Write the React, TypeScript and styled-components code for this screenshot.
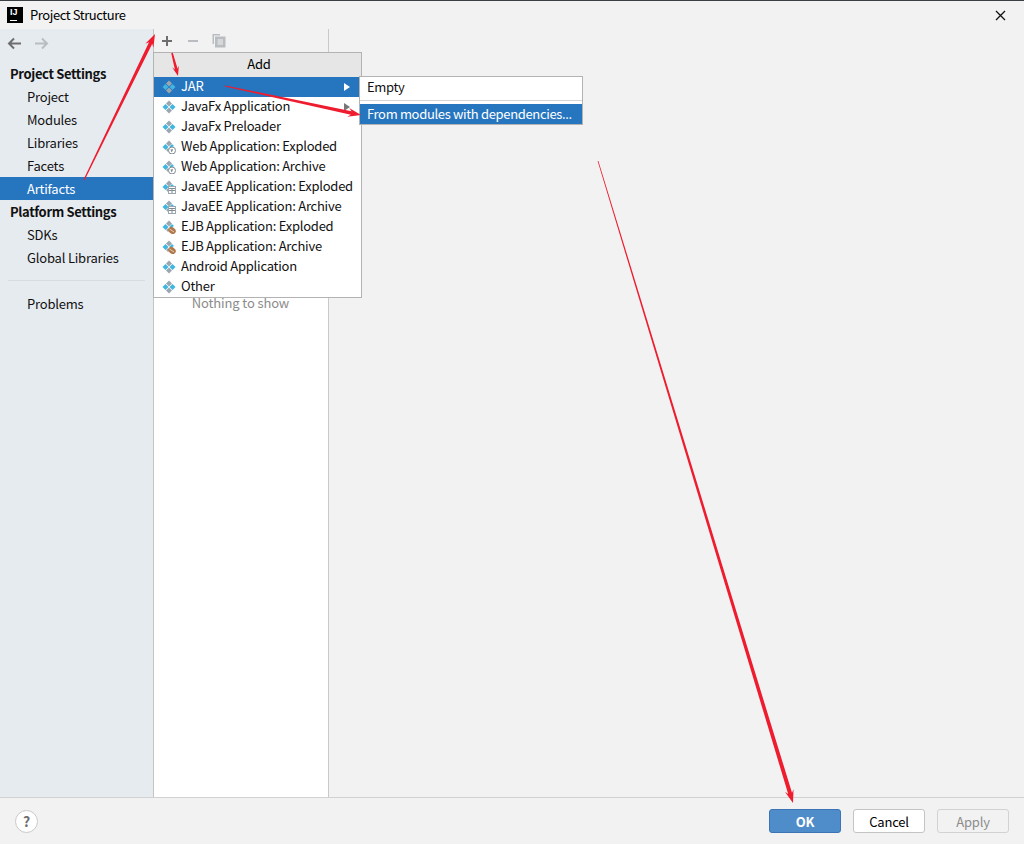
import { createGlobalStyle } from "styled-components";
import styled from "styled-components";

const GlobalStyle = createGlobalStyle`
  html, body {
    margin: 0;
    padding: 0;
    background: #f2f2f2;
  }
  * {
    box-sizing: border-box;
  }
`;

const Window = styled.div`
  position: relative;
  width: 1024px;
  height: 844px;
  display: flex;
  flex-direction: column;
  overflow: hidden;
  background: #f2f2f2;
  color: #000;
  font-family: "Noto Sans CJK SC", "Noto Sans", sans-serif;
  font-size: 13px;
  letter-spacing: -0.2px;
  white-space: nowrap;
  border-top: 1px solid #3c3f41;
`;

const TitleBar = styled.div`
  height: 28px;
  flex: none;
  display: flex;
  align-items: center;
  padding: 0 18px 0 7px;
  gap: 7px;
  background: #f2f2f2;
`;

const Logo = styled.div`
  width: 16px;
  height: 16px;
  background: #000;
  color: #fff;
  font-family: "Liberation Sans", sans-serif;
  font-weight: 700;
  font-size: 9px;
  line-height: 9px;
  letter-spacing: 0;
  padding: 1px 0 0 3px;
  position: relative;

  &::after {
    content: "";
    position: absolute;
    left: 3px;
    bottom: 2px;
    width: 7px;
    height: 1px;
    background: #fff;
  }
`;

const Title = styled.div`
  flex: 1;
  letter-spacing: -0.42px;
  padding-bottom: 1px;
`;

const Body = styled.div`
  flex: 1;
  display: flex;
  min-height: 0;
`;

const Sidebar = styled.div`
  width: 154px;
  flex: none;
  background: #e6ebf0;
  border-right: 1px solid #c4c4c4;
  display: flex;
  flex-direction: column;
`;

const NavArrows = styled.div`
  height: 33px;
  flex: none;
  display: flex;
  align-items: center;
  gap: 12px;
  padding: 0 0 5px 7px;
`;

const SectionTitle = styled.div`
  height: 23px;
  line-height: 23px;
  padding-left: 10px;
  font-weight: 700;
  letter-spacing: -0.35px;
  color: #111;
`;

const NavItem = styled.div<{ $active?: boolean }>`
  height: 23px;
  line-height: 23px;
  padding-left: 27px;
  color: ${(props) => (props.$active ? "#fff" : "#111")};
  background: ${(props) => (props.$active ? "#2675bf" : "transparent")};
`;

const NavList = styled.div`
  display: flex;
  flex-direction: column;
`;

const NavDivider = styled.div`
  height: 1px;
  margin: 11px 8px;
  background: #d9dcdf;
`;

const ListColumn = styled.div`
  width: 175px;
  flex: none;
  display: flex;
  flex-direction: column;
  border-right: 1px solid #c9c9c9;
`;

const Toolbar = styled.div`
  height: 23px;
  flex: none;
  display: flex;
  align-items: center;
  gap: 10px;
  padding-left: 5px;
  background: #f2f2f2;
`;

const ListBody = styled.div`
  flex: 1;
  background: #fff;
  text-align: center;
  padding-top: 241px;
  padding-right: 1px;
  color: #8c8c8c;
  letter-spacing: -0.13px;
`;

const Footer = styled.div`
  height: 47px;
  flex: none;
  display: flex;
  align-items: center;
  gap: 12px;
  padding: 0 15px;
  border-top: 1px solid #d1d1d1;
  background: #f2f2f2;
`;

const HelpButton = styled.div`
  width: 23px;
  height: 23px;
  margin-right: auto;
  border-radius: 50%;
  border: 1px solid #c9c9c9;
  background: #fff;
  color: #6e6e6e;
  font-weight: 700;
  font-size: 14px;
  line-height: 21px;
  text-align: center;
`;

const Button = styled.div<{ $kind?: "primary" | "disabled" }>`
  width: 72px;
  height: 24px;
  border-radius: 3px;
  line-height: 23px;
  text-align: center;
  border: 1px solid
    ${(props) =>
      props.$kind === "primary" ? "#3b74b4" : props.$kind === "disabled" ? "#d2d2d2" : "#c4c4c4"};
  background: ${(props) => (props.$kind === "primary" ? "#4f8cca" : props.$kind === "disabled" ? "#f2f2f2" : "#fff")};
  color: ${(props) => (props.$kind === "primary" ? "#fff" : props.$kind === "disabled" ? "#8c8c8c" : "#000")};
  font-weight: ${(props) => (props.$kind === "primary" ? 700 : 400)};
`;

const Menu = styled.div`
  position: absolute;
  left: 153px;
  top: 51px;
  width: 209px;
  background: #fff;
  border: 1px solid #b3b3b3;
`;

const MenuHeader = styled.div`
  height: 24px;
  line-height: 22px;
  text-align: center;
  padding-left: 3px;
  background: #e6e6e6;
`;

const MenuRow = styled.div<{ $active?: boolean }>`
  height: 20px;
  display: flex;
  align-items: center;
  gap: 5px;
  padding: 0 8px;
  background: ${(props) => (props.$active ? "#2675bf" : "transparent")};
  color: ${(props) => (props.$active ? "#fff" : "#111")};
`;

const MenuLabel = styled.span`
  flex: 1;
  line-height: 18px;
  padding-bottom: 2px;
  letter-spacing: -0.24px;
`;

const MenuCaret = styled.i<{ $active?: boolean }>`
  width: 0;
  height: 0;
  margin-right: 3px;
  border-style: solid;
  border-width: 4px 0 4px 6px;
  border-color: transparent transparent transparent ${(props) => (props.$active ? "#fff" : "#777")};
`;

const SubMenu = styled.div`
  position: absolute;
  left: 359px;
  top: 75px;
  width: 224px;
  background: #fff;
  border: 1px solid #b3b3b3;
`;

const SubRow = styled.div<{ $active?: boolean }>`
  height: ${(props) => (props.$active ? 20 : 23)}px;
  line-height: 19px;
  padding-left: 7px;
  letter-spacing: -0.34px;
  background: ${(props) => (props.$active ? "#2675bf" : "transparent")};
  color: ${(props) => (props.$active ? "#fff" : "#111")};
`;

const SubDivider = styled.div`
  height: 4px;
  border-top: 1px solid #d4d4d4;
`;

const Annotation = styled.svg`
  position: absolute;
  left: 0;
  top: -1px;
  width: 1024px;
  height: 844px;
  pointer-events: none;
`;

type ArrowProps = { x1: number; y1: number; x2: number; y2: number; tail?: number; neck?: number; head?: number; len?: number };

// tapered annotation arrow, thin at the tail and thick near the head
function Arrow({ x1, y1, x2, y2, tail = 0.6, neck = 1.8, head = 4.5, len = 13 }: ArrowProps) {
  const dx = x2 - x1;
  const dy = y2 - y1;
  const d = Math.hypot(dx, dy);
  const ux = dx / d;
  const uy = dy / d;
  const nx = -uy;
  const ny = ux;
  const bx = x2 - ux * len;
  const by = y2 - uy * len;
  const nbx = x2 - ux * (len - 3);
  const nby = y2 - uy * (len - 3);
  const pts = [
    [x1 + nx * tail, y1 + ny * tail],
    [nbx + nx * neck, nby + ny * neck],
    [bx + nx * head, by + ny * head],
    [x2, y2],
    [bx - nx * head, by - ny * head],
    [nbx - nx * neck, nby - ny * neck],
    [x1 - nx * tail, y1 - ny * tail],
  ];
  return <polygon points={pts.map((p) => p.join(",")).join(" ")} fill="#ee1c2e" />;
}

type Badge = "none" | "web" | "ee" | "ejb";

function ArtifactIcon({ badge = "none" }: { badge?: Badge }) {
  const small = badge !== "none";
  return (
    <svg width="14" height="14" viewBox="0 0 14 14" style={{ flex: "none" }}>
      <path d="M7 0.5 L10 3.5 L7 6.5 L4 3.5Z" fill="#9aa7b0" />
      <path d="M3.5 4 L6.5 7 L3.5 10 L0.5 7Z" fill="#40b6e0" />
      {!small && <path d="M10.5 4 L13.5 7 L10.5 10 L7.5 7Z" fill="#40b6e0" />}
      {small && <path d="M10 4 L12 6 L9 8 L7.5 6.5Z" fill="#40b6e0" />}
      {!small && <path d="M7 7.5 L10 10.5 L7 13.5 L4 10.5Z" fill="#9aa7b0" />}
      {small && <path d="M6 8 L7.5 9.5 L6 12 L4 10Z" fill="#9aa7b0" />}
      {badge === "web" && (
        <>
          <circle cx="10" cy="10.5" r="3.5" fill="#fff" stroke="#7f8b91" />
          <path d="M8.5 9.5 L11 9 L10.5 11 L9.5 12.5Z" fill="#7f8b91" />
        </>
      )}
      {badge === "ee" && (
        <>
          <rect x="6.5" y="6.5" width="7" height="7" fill="#fff" stroke="#9aa7b0" />
          <path d="M7 8.5 H13 M7 10.5 H13 M10 8.5 V13" stroke="#7f8b91" strokeWidth="1" />
        </>
      )}
      {badge === "ejb" && (
        <>
          <ellipse cx="10" cy="10.5" rx="4" ry="3.2" fill="#b0794d" transform="rotate(35 10 10.5)" />
          <path d="M7.5 9 L12 12" stroke="#e8cdb4" strokeWidth="1" />
        </>
      )}
    </svg>
  );
}

const items: { label: string; badge?: Badge; active?: boolean; caret?: boolean }[] = [
  { label: "JAR", active: true, caret: true },
  { label: "JavaFx Application", caret: true },
  { label: "JavaFx Preloader" },
  { label: "Web Application: Exploded", badge: "web" },
  { label: "Web Application: Archive", badge: "web" },
  { label: "JavaEE Application: Exploded", badge: "ee" },
  { label: "JavaEE Application: Archive", badge: "ee" },
  { label: "EJB Application: Exploded", badge: "ejb" },
  { label: "EJB Application: Archive", badge: "ejb" },
  { label: "Android Application" },
  { label: "Other" },
];

export default function App() {
  return (
    <>
      <GlobalStyle />
      <Window>
        <TitleBar>
          <Logo>IJ</Logo>
          <Title>Project Structure</Title>
          <svg width="11" height="11" viewBox="0 0 11 11">
            <path d="M1 1 L10 10 M10 1 L1 10" stroke="#111" strokeWidth="1.3" />
          </svg>
        </TitleBar>
        <Body>
          <Sidebar>
            <NavArrows>
              <svg width="15" height="13" viewBox="0 0 15 13">
                <path d="M14 6.5 H2 M7 1.5 L2 6.5 L7 11.5" fill="none" stroke="#6e6e6e" strokeWidth="2" />
              </svg>
              <svg width="15" height="13" viewBox="0 0 15 13">
                <path d="M1 6.5 H13 M8 1.5 L13 6.5 L8 11.5" fill="none" stroke="#b9bdc1" strokeWidth="2" />
              </svg>
            </NavArrows>
            <NavList>
              <SectionTitle>Project Settings</SectionTitle>
              <NavItem>Project</NavItem>
              <NavItem>Modules</NavItem>
              <NavItem>Libraries</NavItem>
              <NavItem>Facets</NavItem>
              <NavItem $active>Artifacts</NavItem>
              <SectionTitle>Platform Settings</SectionTitle>
              <NavItem>SDKs</NavItem>
              <NavItem>Global Libraries</NavItem>
              <NavDivider />
              <NavItem>Problems</NavItem>
            </NavList>
          </Sidebar>
          <ListColumn>
            <Toolbar>
              <svg width="16" height="16" viewBox="0 0 16 16">
                <path d="M8 3 V13 M3 8 H13" stroke="#6e6e6e" strokeWidth="2" />
              </svg>
              <svg width="16" height="16" viewBox="0 0 16 16">
                <path d="M3 8 H13" stroke="#b9bdc1" strokeWidth="2" />
              </svg>
              <svg width="16" height="16" viewBox="0 0 16 16">
                <path d="M1.5 1 H9 V2.5 H3 V11 H1.5Z" fill="#b9bdc1" />
                <path d="M4 3.5 H14.5 V14.5 H4Z" fill="#b9bdc1" />
                <path d="M6.5 7 H12 M6.5 9 H12 M6.5 11 H12" stroke="#f2f2f2" strokeWidth="1" />
              </svg>
            </Toolbar>
            <ListBody>Nothing to show</ListBody>
          </ListColumn>
        </Body>
        <Footer>
          <HelpButton>?</HelpButton>
          <Button $kind="primary">OK</Button>
          <Button>Cancel</Button>
          <Button $kind="disabled">Apply</Button>
        </Footer>

        <Menu>
          <MenuHeader>Add</MenuHeader>
          {items.map((item) => (
            <MenuRow key={item.label} $active={item.active}>
              <ArtifactIcon badge={item.badge} />
              <MenuLabel>{item.label}</MenuLabel>
              {item.caret && <MenuCaret $active={item.active} />}
            </MenuRow>
          ))}
        </Menu>
        <SubMenu>
          <SubRow>Empty</SubRow>
          <SubDivider />
          <SubRow $active>From modules with dependencies...</SubRow>
        </SubMenu>

        <Annotation viewBox="0 0 1024 844">
          <Arrow x1={84} y1={180} x2={155} y2={34} />
          <Arrow x1={172} y1={53} x2={178} y2={76} tail={0.8} neck={1.4} head={3.5} len={10} />
          <Arrow x1={225} y1={86} x2={361} y2={115} />
          <Arrow x1={598} y1={161} x2={793} y2={803} tail={0.4} neck={2} />
        </Annotation>
      </Window>
    </>
  );
}
